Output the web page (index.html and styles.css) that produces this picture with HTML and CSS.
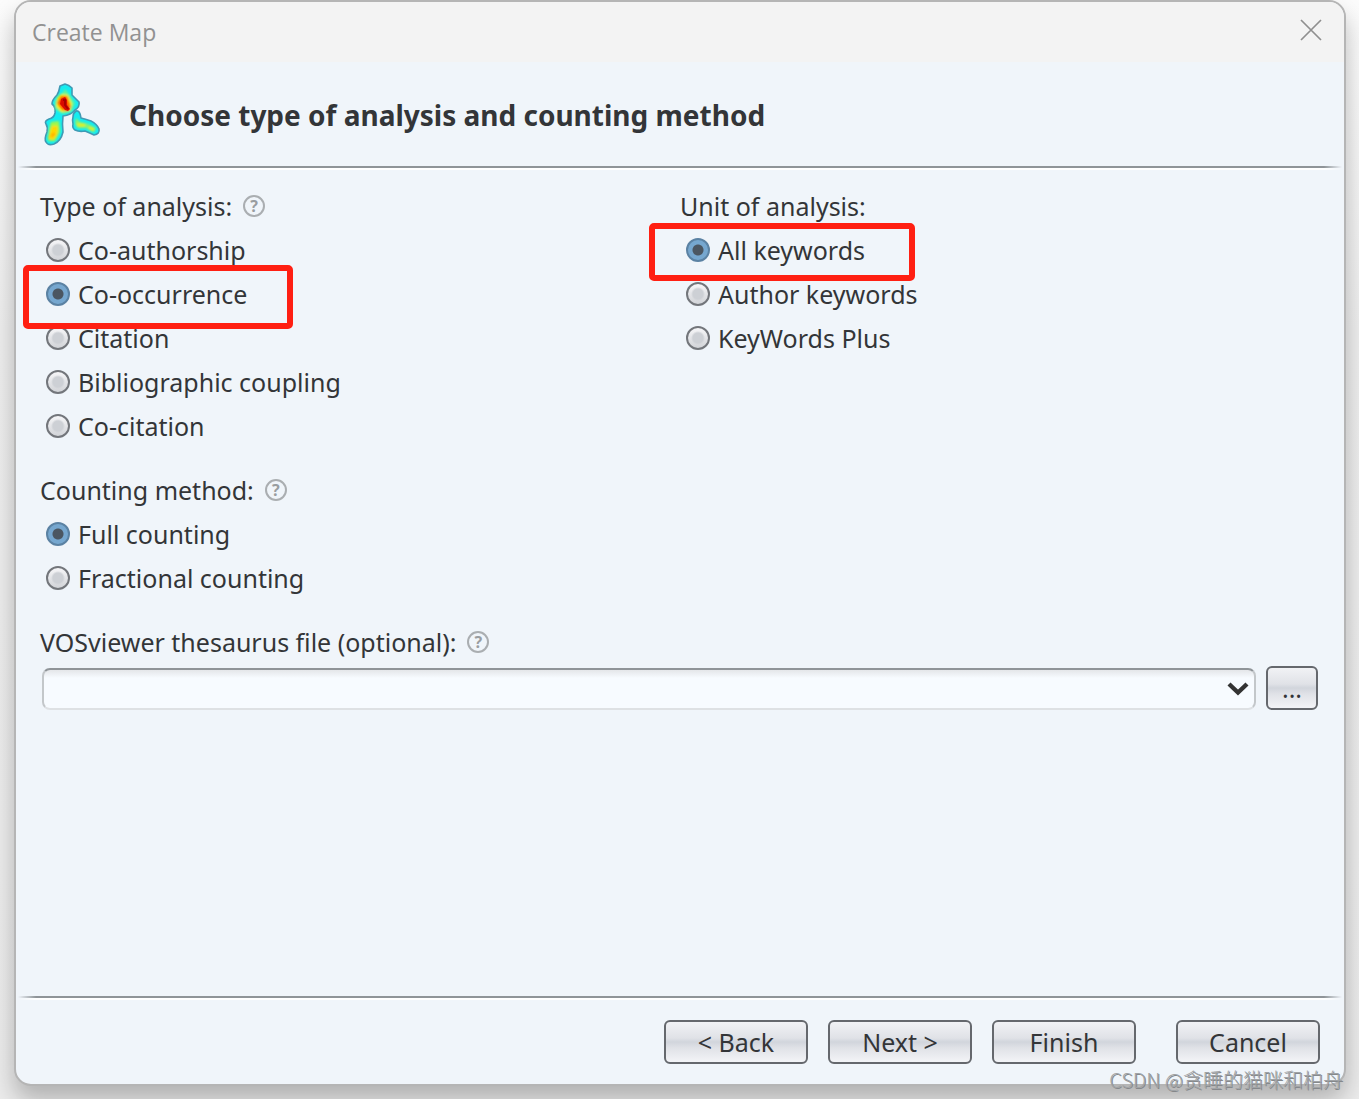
FILE: index.html
```html
<!DOCTYPE html>
<html lang="en">
<head>
<meta charset="utf-8">
<title>Create Map</title>
<link rel="stylesheet" href="styles.css">
</head>
<body>
<main class="window">
  <div class="titlebar">
    <span class="titlebar-text">Create Map</span>
    <button class="close" type="button" aria-label="Close">
      <svg width="22" height="22" viewBox="0 0 22 22"><path d="M1 1L21 21M21 1L1 21" stroke="#8f8f8f" stroke-width="1.7" fill="none"/></svg>
    </button>
  </div>
  <header class="header">
    <svg class="logo" width="58" height="66" viewBox="0 0 58 66" aria-hidden="true">
      <defs>
        <filter id="soft" x="-20%" y="-20%" width="140%" height="140%"><feGaussianBlur stdDeviation="0.9"/></filter>
        <path id="blob" d="M22 2Q26 3 29 6V13Q32 16 36 20Q37 25 32 28Q28 33 20 34Q19 42 20 50Q18 59 11 62Q5 64 3 60Q1 57 4 50Q5 45 3 42Q1 39 6 37Q11 36 12 31Q13 25 9 22Q9 18 14 13Q16 10 17 4Z"/>
        <path id="arm" d="M33 29Q37 28 38 36Q42 37 48 39Q54 42 56 47Q57 52 51 53Q47 51 42 49Q36 50 32 48Q29 46 30 42Q29 38 30 35Q30 31 33 29Z"/>
      </defs>
      <g fill="#14ecf0" stroke="#3f9ab4" stroke-width="1.6" stroke-linejoin="round"><use href="#blob"/><use href="#arm"/></g>
      <g filter="url(#soft)">
        <path d="M22 7L26 12L32 21L29 29L20 32L12 27L12 19L18 13Z" fill="#62f59a"/>
        <path d="M18 12L25 13L29 22L27 29L18 30L13 24L14 16Z" fill="#f6f000"/>
        <path d="M18 14L24 14L28 25L25 29L19 28L14 21Z" fill="#ff5a00"/>
        <path d="M8 40L16 39L17 50L12 59L5 59L6 47Z" fill="#a0f84a"/>
        <path d="M9 44L15 44L14 53L10 58L5 56Z" fill="#ffd800"/>
        <path d="M10 51L12 51L10 55L8 54Z" fill="#ff9a00"/>
        <path d="M33 36L37 40L45 42L53 46L51 50L43 46L35 46L32 42Z" fill="#8df36a"/>
        <path d="M34 43L42 43M46 46L51 48" stroke="#e0f020" stroke-width="3"/>
      </g>
      <path d="M18 17L22 15L24 18L24 23L27 27L25 29L22 28L17 22Z" fill="#d80b00"/>
      <path d="M20 18H22V23L25 27" fill="none" stroke="#a80000" stroke-width="2"/>
    </svg>
    <h1 class="heading">Choose type of analysis and counting method</h1>
  </header>
  <div class="rule"></div>

  <form class="content">
    <div class="columns">
      <div class="column">
        <fieldset class="group">
          <legend class="caption">Type of analysis:
            <button class="help" type="button" aria-label="Help on type of analysis">?</button></legend>
          <label class="option"><input type="radio" name="type">Co-authorship</label>
          <label class="option marked"><input type="radio" name="type" checked>Co-occurrence<span class="mark mark-type"></span></label>
          <label class="option"><input type="radio" name="type">Citation</label>
          <label class="option"><input type="radio" name="type">Bibliographic coupling</label>
          <label class="option"><input type="radio" name="type">Co-citation</label>
        </fieldset>
        <fieldset class="group">
          <legend class="caption">Counting method:
            <button class="help" type="button" aria-label="Help on counting method">?</button></legend>
          <label class="option"><input type="radio" name="counting" checked>Full counting</label>
          <label class="option"><input type="radio" name="counting">Fractional counting</label>
        </fieldset>
      </div>
      <div class="column">
        <fieldset class="group">
          <legend class="caption">Unit of analysis:</legend>
          <label class="option marked"><input type="radio" name="unit" checked>All keywords<span class="mark mark-unit"></span></label>
          <label class="option"><input type="radio" name="unit">Author keywords</label>
          <label class="option"><input type="radio" name="unit">KeyWords Plus</label>
        </fieldset>
      </div>
    </div>
    <div class="caption">
      <label for="thesaurus">VOSviewer thesaurus file (optional):</label>
      <button class="help" type="button" aria-label="Help on thesaurus file">?</button>
    </div>
    <div class="file-row">
      <div class="combo">
        <select id="thesaurus"><option></option></select>
        <svg class="arrow" width="22" height="16" viewBox="0 0 22 16" aria-hidden="true"><path d="M2 3L11 11.500L20 3" fill="none" stroke="#333" stroke-width="4.400"/></svg>
      </div>
      <button class="button browse" type="button">...</button>
    </div>
  </form>

  <div class="rule"></div>
  <footer class="footer">
    <button class="button" type="button">&lt; Back</button>
    <button class="button" type="button">Next &gt;</button>
    <button class="button" type="button">Finish</button>
    <button class="button cancel" type="button">Cancel</button>
  </footer>
</main>
<div class="watermark">CSDN @贪睡的猫咪和柏舟</div>
</body>
</html>
```
FILE: styles.css
```css
* {
  box-sizing: border-box;
}

body {
  position: relative;
  display: flex;
  min-height: 100vh;
  margin: 0;
  padding: 0 13px 13px 14px;
  overflow-x: hidden;
  background: linear-gradient(#fcfcfc, #efefef 30%, #ececec);
  color: #333538;
  font-family: "Noto Sans", "Open Sans", sans-serif;
  font-size: 25px;
  line-height: 44px;
}

.window {
  display: flex;
  flex: 1;
  flex-direction: column;
  min-width: 0;
  border: 2px solid #b5b5b5;
  border-radius: 17px;
  background: #f0f5fa;
  box-shadow: 0 14px 24px rgba(0, 0, 0, 0.25);
}

.titlebar {
  display: flex;
  align-items: center;
  justify-content: space-between;
  height: 60px;
  padding: 0 22px 0 16px;
  border-radius: 15px 15px 0 0;
  background: #f3f3f3;
}

.titlebar-text {
  color: #919191;
  font-family: "Open Sans", sans-serif;
  font-size: 23px;
}

.close {
  display: flex;
  padding: 0 0 4px;
  border: 0;
  background: none;
}

.header {
  display: flex;
  align-items: center;
  gap: 28px;
  height: 104px;
  padding: 2px 27px 0;
}

.heading {
  margin: 0;
  font-size: 28px;
  font-weight: 700;
}

.rule {
  height: 4px;
  margin: 0 2px;
  background: linear-gradient(#8f9498 50%, #fff 50%);
  -webkit-mask-image: linear-gradient(90deg, transparent, #000 18px, #000 calc(100% - 18px), transparent);
  mask-image: linear-gradient(90deg, transparent, #000 18px, #000 calc(100% - 18px), transparent);
}

.content {
  flex: 1;
  padding: 14px 26px 24px 24px;
}

.columns {
  display: grid;
  grid-template-columns: 1fr 1fr;
  column-gap: 2px;
}

.group {
  min-width: 0;
  margin: 0 0 20px;
  padding: 0;
  border: 0;
}

.caption {
  display: flex;
  align-items: center;
  gap: 11px;
  height: 44px;
  padding: 0;
}

.help {
  width: 22px;
  height: 22px;
  padding: 0;
  border: 2px solid #aaaeb1;
  border-radius: 50%;
  background: none;
  color: #999da0;
  font: 700 16px/18px "Noto Sans", sans-serif;
}

.option {
  display: flex;
  align-items: center;
  gap: 8px;
  width: max-content;
  height: 44px;
  padding-left: 6px;
}

.option input {
  appearance: none;
  width: 24px;
  height: 24px;
  margin: 0;
  border: 2px solid #73767b;
  border-radius: 50%;
  background: radial-gradient(circle, #cdd0d5 5px, transparent 7px), linear-gradient(#f6f6f8, #d2d4d8);
}

.option input:checked {
  border-color: #5b82a3;
  background: radial-gradient(circle, #4b5661 5px, #76a7cf 6px);
}

.marked {
  position: relative;
}

.mark {
  position: absolute;
  border: 6px solid #ff1f12;
  border-radius: 5px;
}

.mark-type {
  top: -7px;
  left: -17px;
  width: 270px;
  height: 64px;
}

.mark-unit {
  top: -5px;
  left: -31px;
  width: 266px;
  height: 58px;
}

.file-row {
  display: flex;
  align-items: end;
  gap: 10px;
  margin-top: 2px;
  padding-left: 2px;
}

.combo {
  position: relative;
  flex: 1;
  height: 42px;
}

.combo select {
  appearance: none;
  display: block;
  width: 100%;
  height: 42px;
  padding: 0 40px 0 10px;
  border: 2px solid;
  border-color: #8f9498 #c3c7ca #dee1e4;
  border-radius: 8px;
  background: linear-gradient(#e4e6e9, #f7fbff 8px);
  font: inherit;
}

.arrow {
  position: absolute;
  top: 13px;
  right: 7px;
  pointer-events: none;
}

.button {
  width: 144px;
  height: 44px;
  padding: 0;
  border: 2px solid #65686d;
  border-radius: 6px;
  background: linear-gradient(#f1f2f5, #e0e2e7 40%, #d1d5dc 50%, #e0e2e7 65%, #f3f4f7);
  color: inherit;
  font: inherit;
  line-height: 36px;
}

.browse {
  width: 52px;
}

.footer {
  display: flex;
  justify-content: flex-end;
  gap: 20px;
  padding: 20px 24px;
}

.cancel {
  margin-left: 20px;
}

.watermark {
  position: absolute;
  right: 16px;
  bottom: 4px;
  color: #a0a3a6;
  font-family: "Noto Sans CJK SC", sans-serif;
  font-size: 20px;
  font-weight: 300;
  line-height: 30px;
  text-shadow: 1px 1px #85888b;
}
```
